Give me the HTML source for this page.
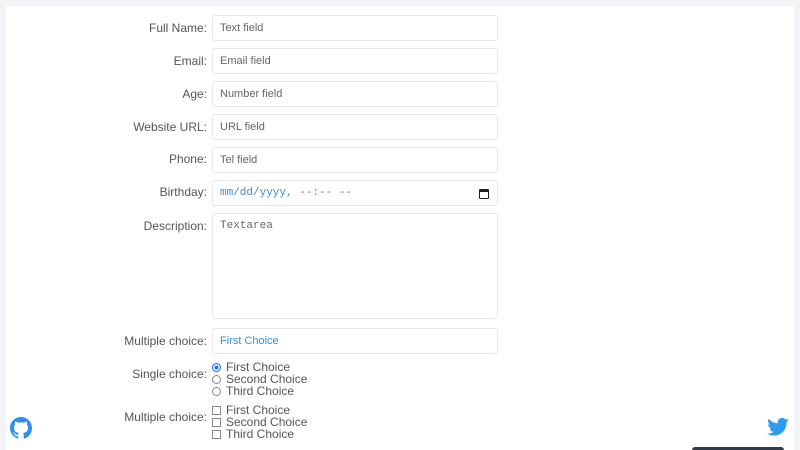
<!DOCTYPE html>
<html><head><style>
html{height:450px;overflow:hidden}
body{margin:0;width:800px;height:450px;background:#f2f3f7;font-family:"Liberation Sans",sans-serif;overflow:hidden;position:relative}
.panel{position:absolute;left:6px;top:6px;width:788px;height:444px;background:#fff}
.lbl{position:absolute;right:593px;font-size:12px;color:#555;text-align:right;white-space:nowrap}
.inp{position:absolute;left:212px;width:284px;height:24px;border:1px solid #e8e8ec;border-radius:3px;font-size:11px;color:#666;box-sizing:content-box;line-height:24px;text-indent:7px;background:#fff}
.opt{position:absolute;left:212px;font-size:12px;color:#555;line-height:12px}
.opt i{display:inline-block;width:7px;height:7px;border:1px solid #888;margin-right:5px;vertical-align:-1px}
.r i{border-radius:50%}
</style></head><body>
<div class="panel"></div>
<div class="lbl" style="top:21px">Full Name:</div><div class="inp" style="top:15px">Text field</div>
<div class="lbl" style="top:54px">Email:</div><div class="inp" style="top:48px">Email field</div>
<div class="lbl" style="top:87px">Age:</div><div class="inp" style="top:81px">Number field</div>
<div class="lbl" style="top:120px">Website URL:</div><div class="inp" style="top:114px">URL field</div>
<div class="lbl" style="top:152px">Phone:</div><div class="inp" style="top:147px">Tel field</div>
<div class="lbl" style="top:185px">Birthday:</div><div class="inp" style="top:180px;font-family:'Liberation Mono',monospace;color:#3a8fd0">mm/dd/yyyy, --:-- --<span style="position:absolute;right:8px;top:8px;width:8px;height:6px;border:1.5px solid #222;border-top-width:3px;border-radius:1px"></span></div>
<div class="lbl" style="top:219px">Description:</div><div class="inp" style="top:213px;height:104px;line-height:24px;font-family:'Liberation Mono',monospace">Textarea</div>
<div class="lbl" style="top:334px">Multiple choice:</div><div class="inp" style="top:328px;color:#3a8fd0">First Choice</div>
<div class="lbl" style="top:367px">Single choice:</div>
<div class="opt r" style="top:361px"><i style="background:#1a73e8;border-color:#1a73e8;box-shadow:inset 0 0 0 1.5px #fff"></i>First Choice</div>
<div class="opt r" style="top:373px"><i></i>Second Choice</div>
<div class="opt r" style="top:385px"><i></i>Third Choice</div>
<div class="lbl" style="top:410px">Multiple choice:</div>
<div class="opt" style="top:404px"><i></i>First Choice</div>
<div class="opt" style="top:416px"><i></i>Second Choice</div>
<div class="opt" style="top:428px"><i></i>Third Choice</div>
<svg style="position:absolute;left:10px;top:417px" width="22" height="22" viewBox="0 0 16 16"><path fill="#2d8ef0" d="M8 0C3.58 0 0 3.58 0 8c0 3.54 2.29 6.53 5.47 7.59.4.07.55-.17.55-.38v-1.33c-2.23.48-2.7-1.07-2.7-1.07-.36-.92-.89-1.17-.89-1.17-.73-.5.06-.49.06-.49.8.06 1.23.83 1.23.83.71 1.22 1.87.87 2.33.66.07-.52.28-.87.5-1.07-1.78-.2-3.64-.89-3.64-3.95 0-.87.31-1.59.82-2.15-.08-.2-.36-1.02.08-2.12 0 0 .67-.21 2.2.82a7.6 7.6 0 0 1 4 0c1.53-1.04 2.2-.82 2.2-.82.44 1.1.16 1.92.08 2.12.51.56.82 1.27.82 2.15 0 3.07-1.87 3.75-3.65 3.95.29.25.54.73.54 1.48v2.2c0 .21.15.46.55.38A8 8 0 0 0 16 8c0-4.42-3.58-8-8-8z"/></svg>
<svg style="position:absolute;left:767px;top:418px" width="22" height="18" viewBox="0 0 24 20"><path fill="#2d9bf0" d="M24 2.4a9.8 9.8 0 01-2.8.8A4.9 4.9 0 0023.3.4a9.9 9.9 0 01-3.1 1.2A4.9 4.9 0 0011.8 6 14 14 0 011.7.9a4.9 4.9 0 001.5 6.6 4.9 4.9 0 01-2.2-.6v.1a4.9 4.9 0 003.9 4.8 4.9 4.9 0 01-2.2.1 4.9 4.9 0 004.6 3.4A9.9 9.9 0 010 17.3 14 14 0 007.5 19.5c9.1 0 14-7.5 14-14v-.6A10 10 0 0024 2.4z"/></svg>
<div style="position:absolute;left:692px;top:447px;width:92px;height:3px;background:#333a48;border-radius:3px 3px 0 0"></div>
</body></html>
